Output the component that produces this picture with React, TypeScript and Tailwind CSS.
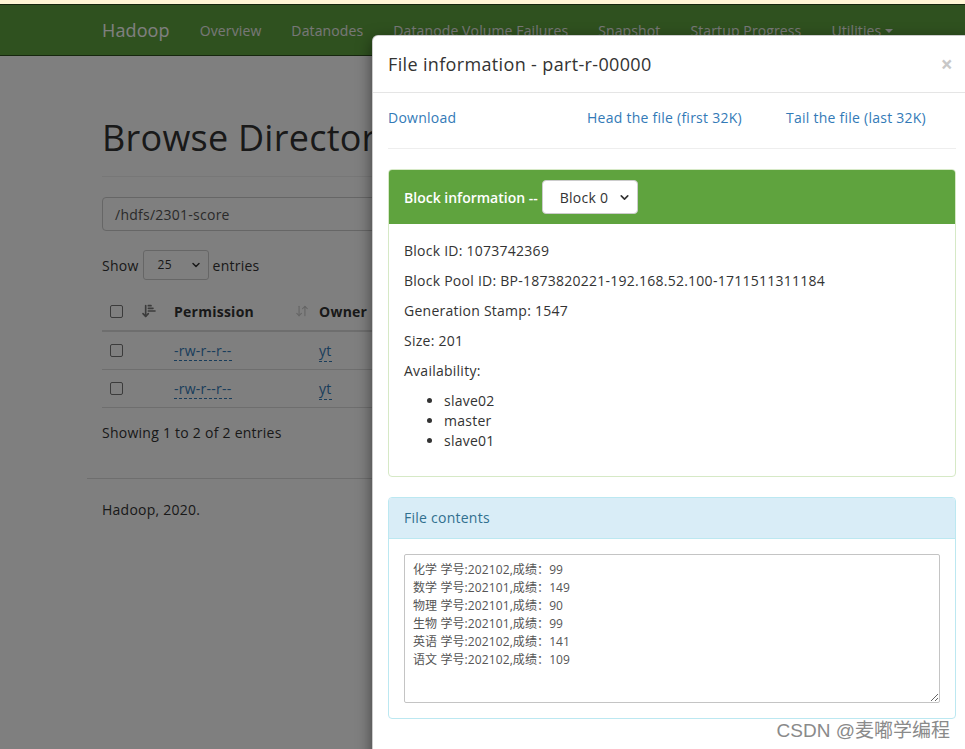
import { ArrowDownNarrowWide, ArrowDownUp, ChevronDown } from "lucide-react";

const NAV = ["Overview", "Datanodes", "Datanode Volume Failures", "Snapshot", "Startup Progress"];

const ROWS = [
  { perm: "-rw-r--r--", owner: "yt" },
  { perm: "-rw-r--r--", owner: "yt" },
];

const BLOCK_INFO = [
  "Block ID: 1073742369",
  "Block Pool ID: BP-1873820221-192.168.52.100-1711511311184",
  "Generation Stamp: 1547",
  "Size: 201",
  "Availability:",
];

const HOSTS = ["slave02", "master", "slave01"];

const CONTENTS = [
  "化学 学号:202102,成绩：99",
  "数学 学号:202101,成绩：149",
  "物理 学号:202101,成绩：90",
  "生物 学号:202101,成绩：99",
  "英语 学号:202102,成绩：141",
  "语文 学号:202102,成绩：109",
].join("\n");

function Checkbox() {
  return <span className="inline-block h-[13px] w-[13px] rounded-[2px] border border-[#767676] bg-white" />;
}

function BrowsePage() {
  return (
    <>
      <div className="h-[4px] bg-[#fff6d5]" />
      <nav className="h-[52px] border-y border-[#2c4f1c] bg-[#5fa33e] tracking-[0.12px]">
        <div className="flex h-full items-center pl-[87px]">
          <span className="px-[15px] text-[18px] text-white">Hadoop</span>
          {NAV.map((n) => (
            <span key={n} className="px-[15px] text-[14px] text-[#eeeeee]">
              {n}
            </span>
          ))}
          <span className="flex items-center gap-1 px-[15px] text-[14px] text-[#eeeeee]">
            Utilities
            <span className="mt-[2px] border-x-[4px] border-t-[4px] border-x-transparent border-t-[#eeeeee]" />
          </span>
        </div>
      </nav>

      <main className="w-[780px] pl-[87px]">
        <div className="px-[15px]">
          <div className="mt-[62px] border-b border-[#eeeeee] pb-[18px]">
            <h1 className="text-[36px] leading-[40px] text-[#333]">Browse Directory</h1>
          </div>

          <div className="mt-[20px] flex h-[34px] items-center rounded-[4px] border border-[#cccccc] px-[12px] text-[#555]">
            /hdfs/2301-score
          </div>

          <div className="mt-[19px] flex items-center gap-[4px]">
            <span>Show</span>
            <span className="flex h-[30px] w-[66px] items-center justify-between rounded-[3px] border border-[#cccccc] pl-[14px] pr-[6px] text-[12px] text-[#333]">
              25
              <ChevronDown size={12} strokeWidth={3} />
            </span>
            <span>entries</span>
          </div>

          <div className="mt-[12px]">
            <div className="flex h-[40px] items-center border-b-2 border-[#dddddd] font-bold">
              <span className="flex w-[38px] pl-[8px]">
                <Checkbox />
              </span>
              <span className="w-[34px] pl-[1px] text-[#777777]">
                <ArrowDownNarrowWide size={16} strokeWidth={2.5} />
              </span>
              <span className="w-[121px]">Permission</span>
              <span className="w-[24px] text-[#cccccc]">
                <ArrowDownUp size={14} />
              </span>
              <span>Owner</span>
            </div>
            {ROWS.map((r, i) => (
              <div key={i} className="flex h-[38px] items-center border-b border-[#dddddd]">
                <span className="flex w-[72px] pl-[8px]">
                  <Checkbox />
                </span>
                <span className="w-[145px]">
                  <span className="border-b border-dashed border-[#337ab7] text-[#337ab7]">{r.perm}</span>
                </span>
                <span className="border-b border-dashed border-[#337ab7] text-[#337ab7]">{r.owner}</span>
              </div>
            ))}
          </div>

          <p className="mt-[15px] leading-[20px]">Showing 1 to 2 of 2 entries</p>
        </div>

        <div className="mt-[35px] border-t border-[#dddddd] px-[15px] pt-[21px]">
          <p className="leading-[20px]">Hadoop, 2020.</p>
        </div>
      </main>
    </>
  );
}

function FileModal() {
  return (
    <div className="absolute left-[372px] top-[35px] w-[600px] rounded-[6px] border border-black/20 bg-white shadow-[0_5px_15px_rgba(0,0,0,0.5)]">
      <div className="flex items-center justify-between border-b border-[#e5e5e5] p-[15px]">
        <h4 className="text-[18px] leading-[26px] tracking-[0.35px] text-[#333]">File information - part-r-00000</h4>
        <span className="mr-[3px] text-[21px] font-bold leading-none text-[#c8c8c8]">×</span>
      </div>

      <div className="px-[15px] pb-[60px] pt-[15px]">
        <div className="grid grid-cols-[199px_199px_1fr] leading-[20px] text-[#337ab7]">
          <span>Download</span>
          <span>Head the file (first 32K)</span>
          <span>Tail the file (last 32K)</span>
        </div>
        <hr className="my-[20px] border-t border-[#eeeeee]" />

        <section className="mb-[20px] rounded-[4px] border border-[#d6e9c6]">
          <div className="flex items-center gap-[4px] rounded-t-[3px] bg-[#5fa33e] px-[15px] py-[10px]">
            <span className="font-semibold tracking-normal text-white">Block information --</span>
            <div className="relative">
              <select
                defaultValue="0"
                className="h-[34px] w-[96px] appearance-none rounded-[4px] border border-[#cccccc] bg-white pl-[17px] text-[14px] text-[#333] outline-none"
              >
                <option value="0">Block 0</option>
              </select>
              <ChevronDown
                size={13}
                strokeWidth={3}
                className="pointer-events-none absolute right-[7px] top-[11px] text-[#333]"
              />
            </div>
          </div>
          <div className="px-[15px] pb-[15px] pt-[17px] leading-[20px] text-[#333]">
            {BLOCK_INFO.map((l) => (
              <p key={l} className="mb-[10px]">
                {l}
              </p>
            ))}
            <ul className="mb-[10px] list-disc pl-[40px]">
              {HOSTS.map((h) => (
                <li key={h}>{h}</li>
              ))}
            </ul>
          </div>
        </section>

        <section className="rounded-[4px] border border-[#bce8f1]">
          <div className="rounded-t-[3px] border-b border-[#bce8f1] bg-[#d9edf7] px-[15px] py-[10px] leading-[20px] text-[#31708f]">
            File contents
          </div>
          <div className="p-[15px]">
            <textarea
              readOnly
              defaultValue={CONTENTS}
              className="block h-[149px] w-full rounded-[2px] border border-[#c4c4c4] px-[8px] py-[6px] text-[12px] leading-[18px] tracking-[0.1px] text-[#555] outline-none"
            />
          </div>
        </section>
      </div>
    </div>
  );
}

export default function App() {
  return (
    <div className="relative h-[749px] w-[965px] overflow-hidden bg-white font-['Open_Sans','Noto_Sans_CJK_SC',sans-serif] text-[14px] tracking-[0.25px] text-[#333]">
      <BrowsePage />
      <div className="absolute inset-x-0 bottom-0 top-[4px] bg-black/50" />
      <FileModal />
      <div className="absolute bottom-[4px] right-[15px] font-['Liberation_Sans','Noto_Sans_CJK_SC',sans-serif] text-[19px] tracking-normal text-[#8a8a8a] [text-shadow:0_0_2px_#fff]">
        CSDN @麦嘟学编程
      </div>
    </div>
  );
}
